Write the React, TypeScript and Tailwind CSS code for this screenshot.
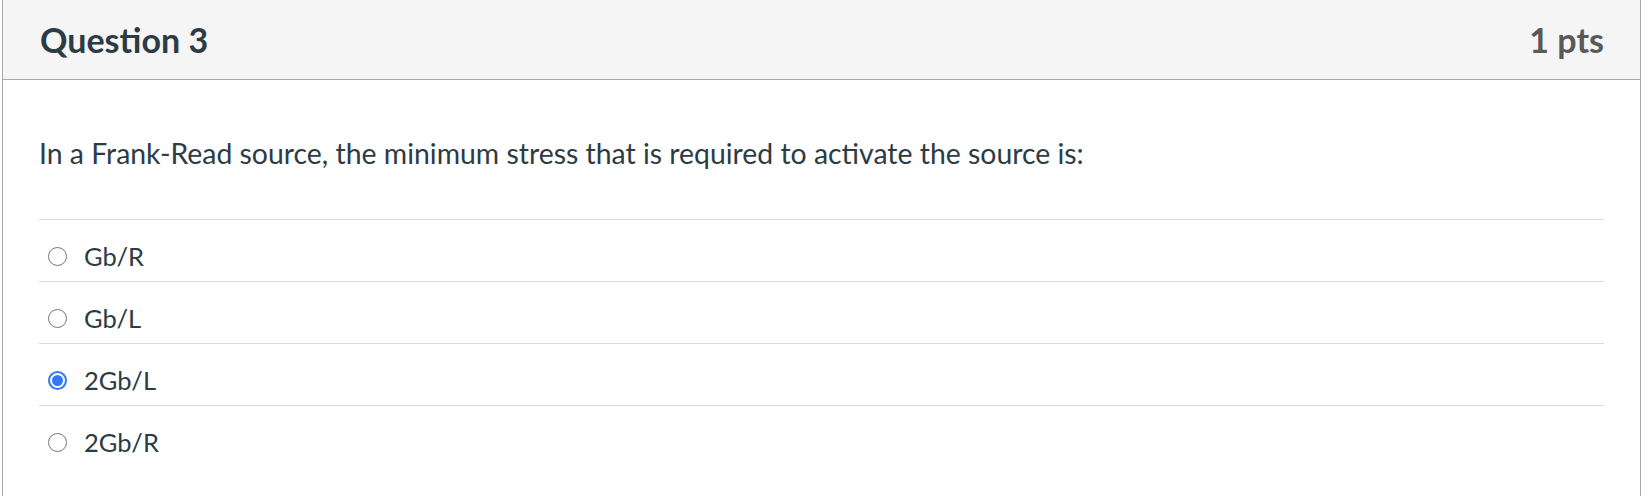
const options = [
  { label: 'Gb/R', checked: false },
  { label: 'Gb/L', checked: false },
  { label: '2Gb/L', checked: true },
  { label: '2Gb/R', checked: false },
];

function Radio({ checked }: { checked: boolean }) {
  if (checked) {
    return (
      <span className="flex h-[19px] w-[19px] shrink-0 items-center justify-center rounded-full border-2 border-[#3478f6] bg-white">
        <span className="h-[11px] w-[11px] rounded-full bg-[#3478f6]" />
      </span>
    );
  }
  return <span className="h-[19px] w-[19px] shrink-0 rounded-full border-[1.5px] border-[#767676] bg-white" />;
}

export default function App() {
  return (
    <div
      className="ml-[2px] h-[496px] w-[1639px] border-x border-[#a8a8a8] bg-white text-[#2d3b45]"
      style={{ fontFamily: 'Lato, "Open Sans", sans-serif' }}
    >
      {/* Header */}
      <div className="flex h-[80px] items-center justify-between border-b border-[#a8a8a8] bg-[#f5f5f5] pl-[37px] pr-[36px]">
        <h2 className="text-[34px] font-bold leading-none">Question 3</h2>
        <span className="text-[34px] font-bold leading-none text-[#595959]">1 pts</span>
      </div>

      {/* Body */}
      <div className="px-[36px]">
        <p className="mb-[46px] pt-[53px] text-[28.4px] leading-[40px]">
          In a Frank-Read source, the minimum stress that is required to activate the source is:
        </p>
        <div>
          {options.map((o, i) => (
            <label
              key={i}
              className="flex h-[62px] items-center gap-[17px] pl-[9px] pt-[12px] border-t border-[#d9d9d9]"
            >
              <Radio checked={o.checked} />
              <span className="text-[25.5px] leading-none">{o.label}</span>
            </label>
          ))}
        </div>
      </div>
    </div>
  );
}
